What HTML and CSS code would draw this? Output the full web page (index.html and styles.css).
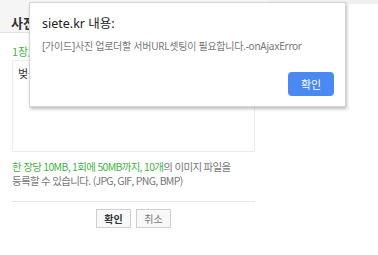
FILE: index.html
```html
<!DOCTYPE html>
<html lang="ko">
<head>
<meta charset="utf-8">
<link rel="stylesheet" href="styles.css">
</head>
<body>
<div class="screen">
  <div class="page">
    <div class="header"><span class="title">사진 첨부</span></div>
    <div class="content">
      <div class="count"><span class="green">1장</span>/10장</div>
      <div class="box">벚꽃.jpg</div>
      <p class="notice"><span class="line"><span class="green">한 장당 10MB, 1회에 50MB까지, 10개</span>의 이미지 파일을</span><span class="line">등록할 수 있습니다. (JPG, GIF, PNG, BMP)</span></p>
      <div class="actions">
        <button class="btn strong">확인</button>
        <button class="btn">취소</button>
      </div>
    </div>
  </div>
  <div class="side"></div>
</div>
<div class="dialog">
  <div class="dlg-title">siete.kr 내용:</div>
  <div class="dlg-msg">[가이드]사진 업로더할 서버URL셋팅이 필요합니다.-onAjaxError</div>
  <div class="dlg-actions"><button class="dlg-btn">확인</button></div>
</div>
</body>
</html>
```
FILE: styles.css
```css
html, body {
  margin: 0;
  padding: 0;
  background: #fff;
}
body {
  font-family: "Noto Sans", "Noto Sans CJK KR", sans-serif;
  width: 378px;
  height: 255px;
  overflow: hidden;
  position: relative;
}
.screen {
  display: flex;
  height: 255px;
}
.page {
  width: 268px;
  flex: none;
}
.side {
  flex: 1;
  border-top: 4px solid #f0f0f0;
  height: 0;
}
.header {
  height: 33px;
  box-sizing: border-box;
  background: #f5f5f5;
  border-bottom: 1px solid #e3e3e3;
  padding: 11px 0 0 11px;
}
.title {
  font-family: "Noto Sans CJK KR", sans-serif;
  font-size: 13px;
  font-weight: bold;
  color: #333;
  line-height: 16px;
}
.content {
  padding: 0 13px 0 12px;
  font-family: "Noto Sans CJK KR", sans-serif;
}
.count {
  margin-top: 11px;
  font-size: 11px;
  line-height: 15px;
  color: #666;
}
.green { color: #45b445; }
.box {
  margin-top: 1px;
  height: 92px;
  box-sizing: border-box;
  border: 1px solid #ececec;
  padding: 5px 5px;
  font-size: 11px;
  line-height: 15px;
  color: #333;
}
.notice {
  margin: 8px 0 0;
  font-size: 10.5px;
  line-height: 14px;
  letter-spacing: -0.7px;
  color: #777;
  height: 41px;
}
.line {
  display: block;
  white-space: nowrap;
}
.actions {
  border-top: 1px solid #e6e6e6;
  padding-top: 7px;
  display: flex;
  justify-content: center;
  gap: 5px;
}
.btn {
  width: 35px;
  height: 19px;
  padding: 0;
  border: 1px solid #d0d0d0;
  background: #f8f8f8;
  font-family: "Noto Sans CJK KR", sans-serif;
  font-size: 10px;
  color: #777;
  line-height: 17px;
}
.btn.strong {
  font-weight: bold;
  color: #333;
}
.dialog {
  position: absolute;
  left: 29px;
  top: 2px;
  width: 317px;
  height: 105px;
  box-sizing: border-box;
  background: #fff;
  border: 1px solid #d4d4d4;
  box-shadow: 1px 2px 3px rgba(0,0,0,0.25);
  padding: 13px 11px 0 12px;
}
.dlg-title {
  font-size: 12.5px;
  line-height: 16px;
  color: #222;
}
.dlg-msg {
  margin-top: 7px;
  font-size: 10px;
  line-height: 14px;
  letter-spacing: -0.25px;
  color: #777;
  white-space: nowrap;
}
.dlg-actions {
  display: flex;
  justify-content: flex-end;
  margin-top: 19px;
}
.dlg-btn {
  width: 46px;
  height: 24px;
  border: none;
  border-radius: 4px;
  background: #4a89f1;
  color: #fff;
  font-family: "Noto Sans CJK KR", sans-serif;
  font-size: 11px;
  padding: 0;
}
```
